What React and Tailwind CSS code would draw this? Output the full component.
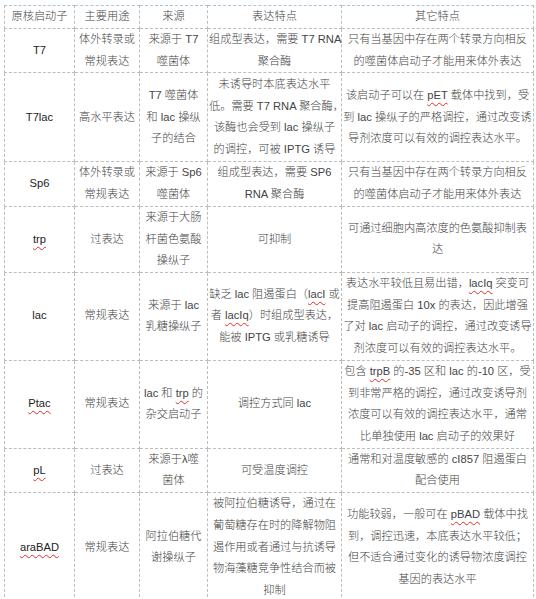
const W = ({ children }) => (
  <span className="underline decoration-wavy decoration-[#e0302a] decoration-1 underline-offset-[3px]">
    {children}
  </span>
);

// line breaks follow the reference exactly
const L = (...lines) =>
  lines.map((l, i) => (
    <span key={i} className="block">
      {l}
    </span>
  ));

const header = ["原核启动子", "主要用途", "来源", "表达特点", "其它特点"];

const rows = [
  {
    h: "h-[42px]",
    cells: [
      "T7",
      L("体外转录或", "常规表达"),
      L("来源于 T7", "噬菌体"),
      L("组成型表达，需要 T7 RNA", "聚合酶"),
      L("只有当基因中存在两个转录方向相反", "的噬菌体启动子才能用来体外表达"),
    ],
  },
  {
    h: "h-[89px]",
    cells: [
      "T7lac",
      "高水平表达",
      L("T7 噬菌体", "和 lac 操纵", "子的结合"),
      L("未诱导时本底表达水平", "低。需要 T7 RNA 聚合酶，", "该酶也会受到 lac 操纵子", "的调控，可被 IPTG 诱导"),
      L(
        <>该启动子可以在 <W>pET</W> 载体中找到，受</>,
        "到 lac 操纵子的严格调控，通过改变诱",
        "导剂浓度可以有效的调控表达水平。"
      ),
    ],
  },
  {
    h: "h-[43px]",
    cells: [
      "Sp6",
      L("体外转录或", "常规表达"),
      L("来源于 Sp6", "噬菌体"),
      L("组成型表达，需要 SP6", "RNA 聚合酶"),
      L("只有当基因中存在两个转录方向相反", "的噬菌体启动子才能用来体外表达"),
    ],
  },
  {
    h: "h-[66px]",
    cells: [
      <W>trp</W>,
      "过表达",
      L("来源于大肠", "杆菌色氨酸", "操纵子"),
      "可抑制",
      L("可通过细胞内高浓度的色氨酸抑制表", "达"),
    ],
  },
  {
    h: "h-[87px]",
    cells: [
      "lac",
      "常规表达",
      L("来源于 lac", "乳糖操纵子"),
      L(
        <>缺乏 lac 阻遏蛋白（<W>lacI</W> 或</>,
        <>者 <W>lacIq</W>）时组成型表达，</>,
        "能被 IPTG 或乳糖诱导"
      ),
      L(
        <>表达水平较低且易出错，<W>lacIq</W> 突变可</>,
        "提高阻遏蛋白 10x 的表达，因此增强",
        "了对 lac 启动子的调控，通过改变诱导",
        "剂浓度可以有效的调控表达水平。"
      ),
    ],
  },
  {
    h: "h-[88px]",
    cells: [
      <W>Ptac</W>,
      "常规表达",
      L(<>lac 和 <W>trp</W> 的</>, "杂交启动子"),
      "调控方式同 lac",
      L(
        <>包含 <W>trpB</W> 的-35 区和 lac 的-10 区，受</>,
        "到非常严格的调控，通过改变诱导剂",
        "浓度可以有效的调控表达水平，通常",
        "比单独使用 lac 启动子的效果好"
      ),
    ],
  },
  {
    h: "h-[43px]",
    cells: [
      <W>pL</W>,
      "过表达",
      L("来源于λ噬", "菌体"),
      "可受温度调控",
      L("通常和对温度敏感的 cI857 阻遏蛋白", "配合使用"),
    ],
  },
  {
    h: "h-[110px]",
    cells: [
      <W>araBAD</W>,
      "常规表达",
      L("阿拉伯糖代", "谢操纵子"),
      L("被阿拉伯糖诱导，通过在", "葡萄糖存在时的降解物阻", "遏作用或者通过与抗诱导", "物海藻糖竞争性结合而被", "抑制"),
      L(
        <>功能较弱，一般可在 <W>pBAD</W> 载体中找</>,
        "到，调控迅速，本底表达水平较低；",
        "但不适合通过变化的诱导物浓度调控",
        "基因的表达水平"
      ),
    ],
  },
];

const cell =
  "border border-dashed border-[#bdbdbd] px-[1px] py-0 text-center align-middle whitespace-nowrap";

export default function App() {
  return (
    <div className="bg-white w-[536px] h-[599px] pl-[4px] pt-[5px] text-[#444] text-[11.2px] font-light leading-[21.7px] font-['Liberation_Sans','Noto_Sans_CJK_SC',sans-serif]">
      <table className="table-fixed border-collapse w-[529px]">
        <colgroup>
          <col className="w-[70px]" />
          <col className="w-[65px]" />
          <col className="w-[68px]" />
          <col className="w-[134px]" />
          <col className="w-[192px]" />
        </colgroup>
        <thead>
          <tr className="h-[23px]">
            {header.map((t) => (
              <th
                key={t}
                className={`${cell} font-light border-t border-t-solid border-t-[#a9c4df]`}
              >
                {t}
              </th>
            ))}
          </tr>
        </thead>
        <tbody>
          {rows.map((r, i) => (
            <tr key={i} className={r.h}>
              {r.cells.map((c, j) => (
                <td
                  key={j}
                  className={`${cell} ${j === 0 ? "text-[#222]" : ""} ${
                    i === rows.length - 1 ? "border-b-2 border-b-solid border-b-[#a3c7e8]" : ""
                  }`}
                >
                  {c}
                </td>
              ))}
            </tr>
          ))}
        </tbody>
      </table>
    </div>
  );
}
